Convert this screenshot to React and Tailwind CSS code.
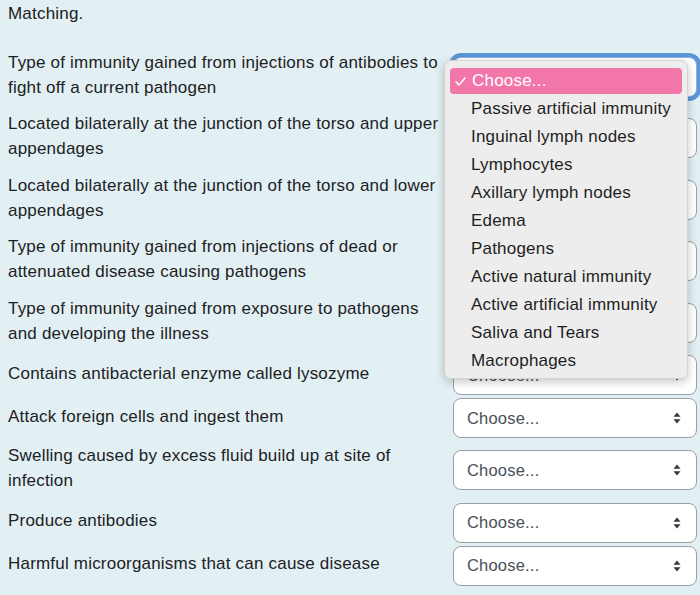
import React from "react";

const rows = [
  ["Type of immunity gained from injections of antibodies to", "fight off a current pathogen"],
  ["Located bilaterally at the junction of the torso and upper", "appendages"],
  ["Located bilaterally at the junction of the torso and lower", "appendages"],
  ["Type of immunity gained from injections of dead or", "attenuated disease causing pathogens"],
  ["Type of immunity gained from exposure to pathogens", "and developing the illness"],
  ["Contains antibacterial enzyme called lysozyme"],
  ["Attack foreign cells and ingest them"],
  ["Swelling caused by excess fluid build up at site of", "infection"],
  ["Produce antibodies"],
  ["Harmful microorganisms that can cause disease"],
];

const options = [
  "Passive artificial immunity",
  "Inguinal lymph nodes",
  "Lymphocytes",
  "Axillary lymph nodes",
  "Edema",
  "Pathogens",
  "Active natural immunity",
  "Active artificial immunity",
  "Saliva and Tears",
  "Macrophages",
];

function Arrows() {
  return (
    <svg width="8" height="12" viewBox="0 0 8 12" className="shrink-0">
      <path d="M4 0.5 L7.5 4.8 L0.5 4.8 Z" fill="#343a40" />
      <path d="M4 11.5 L7.5 7.2 L0.5 7.2 Z" fill="#343a40" />
    </svg>
  );
}

function Select({ focused }) {
  return (
    <div
      className={
        "w-[244px] h-10 shrink-0 rounded-[8px] bg-white flex items-center justify-between pl-[13px] pr-[15px] text-[16.5px] text-[#495057] " +
        (focused
          ? "border border-[#8db6e6] ring-[4px] ring-[#5b95d3]"
          : "border border-[#9a9fa5]")
      }
    >
      <span>Choose...</span>
      <Arrows />
    </div>
  );
}

export default function App() {
  return (
    <div
      className="relative w-[700px] h-[595px] overflow-hidden bg-[#e2f0f3] text-[#1d2125] text-[17px] tracking-[0.2px]"
      style={{ fontFamily: '"Liberation Sans", Arial, sans-serif' }}
    >
      <div className="pl-2 leading-[25px] pt-px">Matching.</div>
      <div className="mt-[20px] flex flex-col">
        {rows.map((lines, i) => (
          <div
            key={i}
            className={"flex items-center pl-2 " + (lines.length > 1 ? "h-[61.5px]" : "h-[43px]")}
          >
            <div className="w-[445px] shrink-0 leading-[25px] pb-[4px] whitespace-nowrap">
              {lines.map((l, j) => (
                <div key={j}>{l}</div>
              ))}
            </div>
            <Select focused={i === 0} />
          </div>
        ))}
      </div>

      {/* open dropdown menu */}
      <div className="absolute left-[444px] top-[60px] w-[244px] h-[319px] rounded-[7px] bg-[#ededed] border border-[#d4d4d4] shadow-[0_3px_10px_rgba(0,0,0,0.22)] pt-[6px] px-[5px] text-[17px] tracking-[0.2px] text-[#1e1e1e]">
        <div className="h-[28px] flex items-center">
          <div className="h-[26px] w-full rounded-[4px] bg-[#f276a8] text-white flex items-center pl-[5px]">
            <svg width="11" height="9" viewBox="0 0 11 9" className="mr-[6px]">
              <path d="M1 4.8 L4 8 L10 1" fill="none" stroke="white" strokeWidth="1.5" strokeLinecap="round" strokeLinejoin="round" />
            </svg>
            <span>Choose...</span>
          </div>
        </div>
        {options.map((o) => (
          <div key={o} className="h-[28px] flex items-center pl-[21px]">
            {o}
          </div>
        ))}
      </div>
    </div>
  );
}
